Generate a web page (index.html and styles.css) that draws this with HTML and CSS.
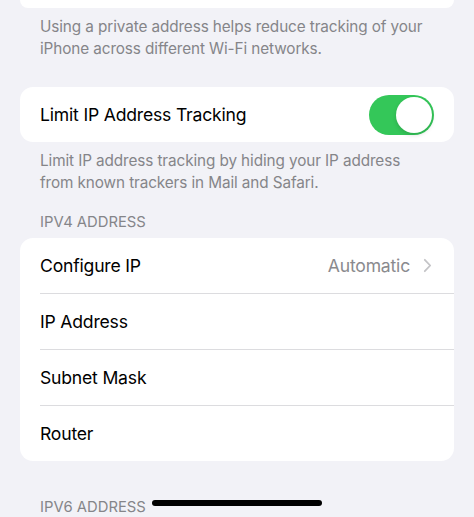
FILE: index.html
```html
<!DOCTYPE html>
<html>
<head>
<meta charset="utf-8">
<link rel="stylesheet" href="styles.css">
</head>
<body>
<div class="page">
  <div class="card top-card"></div>
  <p class="footer">Using a private address helps reduce tracking of your iPhone across different Wi-Fi networks.</p>

  <div class="card card-toggle">
    <div class="row">
      <span class="label">Limit IP Address Tracking</span>
      <span class="toggle"><span class="knob"></span></span>
    </div>
  </div>
  <p class="footer">Limit IP address tracking by hiding your IP address from known trackers in Mail and Safari.</p>

  <h2 class="header">IPV4 ADDRESS</h2>
  <div class="card list">
    <div class="row">
      <span class="label">Configure IP</span>
      <span class="value">Automatic
        <svg class="chev" width="9" height="15" viewBox="0 0 9 15"><path d="M1.8 1.8 L7.2 7.5 L1.8 13.2" fill="none" stroke="#c4c4c7" stroke-width="1.8" stroke-linecap="round" stroke-linejoin="round"/></svg>
      </span>
    </div>
    <div class="row"><span class="label">IP Address</span></div>
    <div class="row"><span class="label">Subnet Mask</span></div>
    <div class="row"><span class="label">Router</span></div>
  </div>

  <h2 class="header header-v6">IPV6 ADDRESS</h2>
</div>
<div class="home-indicator"></div>
</body>
</html>
```
FILE: styles.css
```css
html, body {
  margin: 0;
  padding: 0;
  background: #f2f2f7;
  overflow: hidden;
}
body {
  font-family: Inter, "Open Sans", "Liberation Sans", sans-serif;
  color: #000;
  height: 517px;
}
.page {
  display: flex;
  flex-direction: column;
}
.card {
  background: #fff;
  margin: 0 20px;
  border-radius: 13px;
}
.top-card {
  height: 8px;
  border-radius: 0 0 13px 13px;
}
.footer {
  margin: 8px 0 0;
  padding: 0 40px;
  font-size: 15.3px;
  line-height: 21.5px;
  color: #858589;
  letter-spacing: -0.1px;
}
.card-toggle {
  margin-top: 28px;
}
.row {
  height: 55px;
  display: flex;
  align-items: center;
  justify-content: space-between;
  padding: 0 20px 0 20px;
  box-sizing: border-box;
  position: relative;
}
.list .row + .row {
  border-top: 1px solid #dcdcdf;
  margin-left: 20px;
  padding-left: 0;
  height: 56px;
}
.label {
  font-size: 17.6px;
  letter-spacing: -0.2px;
}
.toggle {
  width: 65px;
  height: 40px;
  border-radius: 20px;
  background: #34c759;
  display: flex;
  align-items: center;
  justify-content: flex-end;
  padding: 0 2px;
  box-sizing: border-box;
}
.knob {
  width: 36px;
  height: 36px;
  border-radius: 50%;
  background: #fff;
  box-shadow: 0 2px 4px rgba(0,0,0,0.15);
}
.header {
  margin: 20px 0 0;
  padding: 0 40px 7px;
  font-size: 14.8px;
  line-height: 18px;
  font-weight: 400;
  color: #858589;
  letter-spacing: 0;
}
.value {
  display: flex;
  align-items: center;
  gap: 13px;
  font-size: 17.6px;
  color: #8a8a8e;
  letter-spacing: -0.2px;
  margin-right: 2px;
}
.header-v6 {
  margin-top: 37px;
}
.home-indicator {
  position: fixed;
  left: 152px;
  top: 500px;
  width: 170px;
  height: 6px;
  border-radius: 3px;
  background: #000;
}
```
